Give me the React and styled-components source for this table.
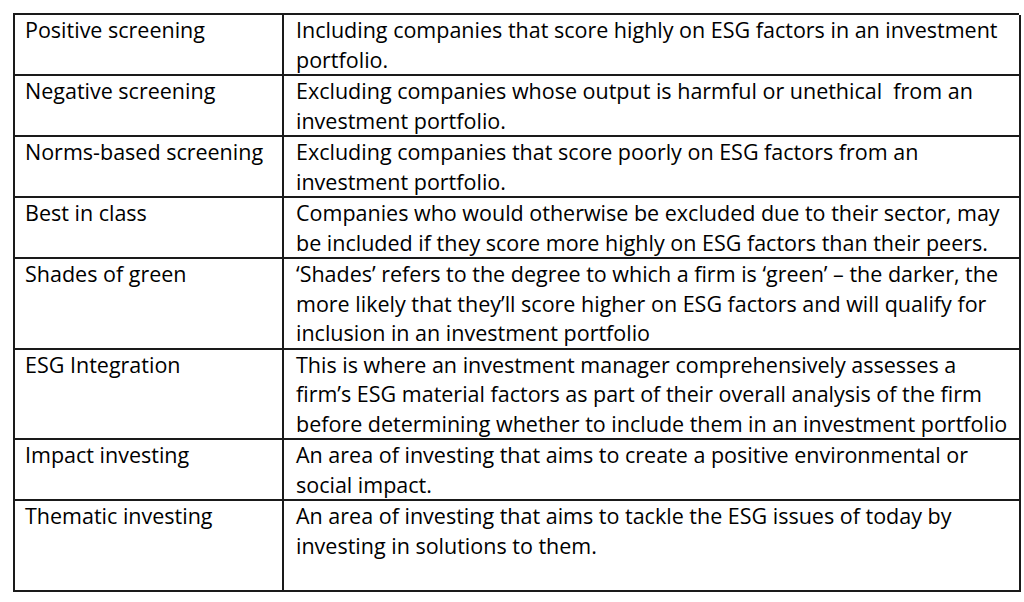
import React from "react";
import styled, { createGlobalStyle } from "styled-components";

const GlobalStyle = createGlobalStyle`
  html, body {
    margin: 0;
    padding: 0;
    background: #fff;
  }
  body {
    font-family: "Open Sans", "Noto Sans", sans-serif;
    color: #000;
  }
`;

const Page = styled.div`
  padding: 13px 0 0 13px;
`;

const Table = styled.div`
  display: grid;
  grid-template-columns: 269px 737px;
  width: 1006px;
  border-top: 2px solid #1a1a1a;
  border-left: 2px solid #1a1a1a;
  box-sizing: border-box;
`;

const Cell = styled.div`
  border-right: 2px solid #1a1a1a;
  border-bottom: 2px solid #1a1a1a;
  padding-left: ${(p) => (p.$term ? "10px" : "12px")};
  font-size: 21.5px;
  line-height: 29.5px;
  color: #000;
`;

const Line = styled.span`
  display: block;
  white-space: pre;
`;

const rows = [
  [
    "Positive screening",
    ["Including companies that score highly on ESG factors in an investment", "portfolio."],
  ],
  [
    "Negative screening",
    ["Excluding companies whose output is harmful or unethical  from an", "investment portfolio."],
  ],
  [
    "Norms-based screening",
    ["Excluding companies that score poorly on ESG factors from an", "investment portfolio."],
  ],
  [
    "Best in class",
    [
      "Companies who would otherwise be excluded due to their sector, may",
      "be included if they score more highly on ESG factors than their peers.",
    ],
  ],
  [
    "Shades of green",
    [
      "\u2018Shades\u2019 refers to the degree to which a firm is \u2018green\u2019 \u2013 the darker, the",
      "more likely that they\u2019ll score higher on ESG factors and will qualify for",
      "inclusion in an investment portfolio",
    ],
  ],
  [
    "ESG Integration",
    [
      "This is where an investment manager comprehensively assesses a",
      "firm\u2019s ESG material factors as part of their overall analysis of the firm",
      "before determining whether to include them in an investment portfolio",
    ],
  ],
  [
    "Impact investing",
    ["An area of investing that aims to create a positive environmental or", "social impact."],
  ],
  [
    "Thematic investing",
    ["An area of investing that aims to tackle the ESG issues of today by", "investing in solutions to them.", " "],
  ],
];

const App = () => {
  return (
    <>
      <GlobalStyle />
      <Page>
        <Table>
          {rows.map(([term, lines]) => (
            <React.Fragment key={term}>
              <Cell $term>{term}</Cell>
              <Cell>
                {lines.map((l, i) => (
                  <Line key={i}>{l}</Line>
                ))}
              </Cell>
            </React.Fragment>
          ))}
        </Table>
      </Page>
    </>
  );
};

export default App;
